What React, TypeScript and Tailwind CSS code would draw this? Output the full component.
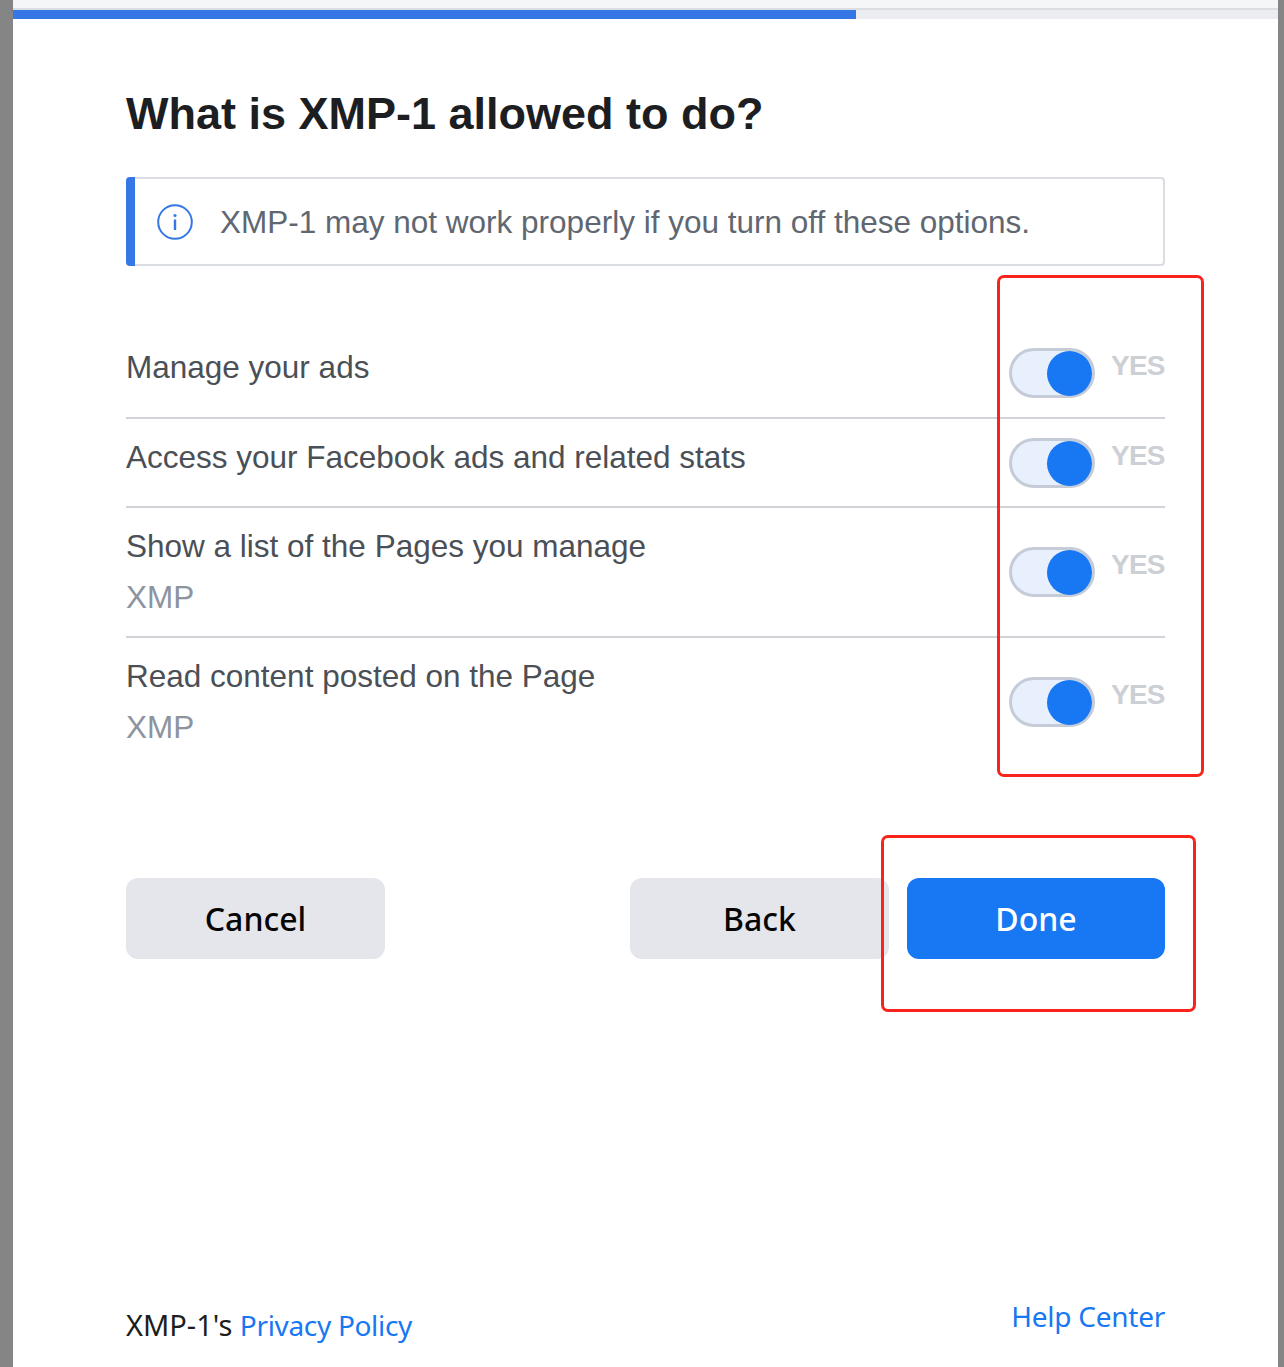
const SANS = 'font-["Liberation_Sans",Arial,sans-serif]'

interface Permission { label: string; page?: string; height: string; toggleTop: string; border: boolean }

const permissions: Permission[] = [
  { label: 'Manage your ads', height: 'h-[90px]', toggleTop: 'mt-[1px]', border: true },
  { label: 'Access your Facebook ads and related stats', height: 'h-[89px]', toggleTop: 'mt-[1px]', border: true },
  { label: 'Show a list of the Pages you manage', page: 'XMP', height: 'h-[130px]', toggleTop: 'mt-[21px]', border: true },
  { label: 'Read content posted on the Page', page: 'XMP', height: 'h-[130px]', toggleTop: 'mt-[21px]', border: false },
]

function Toggle({ top }: { top: string }) {
  return (
    <div className={`flex items-start ${top}`}>
      <div className="w-[86px] h-[50px] rounded-full bg-[#e7f0fc] border-[3px] border-[#c5ccd8] relative">
        <div className="absolute right-0 top-0 w-[45px] h-[45px] rounded-full bg-[#1877f2]" />
      </div>
      <span className={`${SANS} ml-[16px] mt-[2px] text-[28px] leading-[32px] font-bold text-[#ccd0d5] w-[54px] tracking-[-0.8px] whitespace-nowrap`}>YES</span>
    </div>
  )
}

function Row({ p }: { p: Permission }) {
  return (
    <div className={`${p.height} pt-[18px] flex justify-between ${p.border ? 'border-b-2 border-[#d0d3d8]' : ''}`}>
      <div>
        <p className={`${SANS} text-[31.5px] leading-[40px] text-[#4b4f56] whitespace-nowrap`}>{p.label}</p>
        {p.page && <p className={`${SANS} text-[31.5px] leading-[40px] mt-[11px] text-[#8d949e]`}>{p.page}</p>}
      </div>
      <Toggle top={p.toggleTop} />
    </div>
  )
}

export default function App() {
  return (
    <div className="w-[1284px] h-[1367px] bg-[#858585] overflow-hidden relative">
      <div className="ml-[13px] w-[1265px] h-[1367px] bg-white flex flex-col">
        {/* top strip + progress */}
        <div className="h-[10px] bg-[#f5f6f7] border-b-2 border-[#dadde1] shrink-0" />
        <div className="h-[9px] bg-[#ebedf0] shrink-0">
          <div className="h-full w-[843px] bg-[#3578e5]" />
        </div>

        <div className="pl-[113px] pr-[113px] flex flex-col flex-1">
          <h1 className={`${SANS} mt-[66px] text-[45px] leading-[58px] font-bold text-[#1c1e21] whitespace-nowrap`}>What is XMP-1 allowed to do?</h1>

          {/* notice */}
          <div className="mt-[34px] h-[89px] border-2 border-l-0 border-[#dadde1] rounded-[4px] flex items-center relative pl-[31px]">
            <div className="absolute left-0 top-[-2px] bottom-[-2px] w-[9px] bg-[#3578e5] rounded-l-[4px]" />
            <svg width="36" height="36" viewBox="0 0 36 36" fill="none" className="shrink-0">
              <circle cx="18" cy="18" r="16.8" stroke="#3578e5" strokeWidth="2" />
              <circle cx="18" cy="11.5" r="1.6" fill="#3578e5" />
              <rect x="16.8" y="15.5" width="2.4" height="10.5" fill="#3578e5" />
            </svg>
            <span className={`${SANS} ml-[27px] text-[31.5px] leading-[40px] text-[#606770] whitespace-nowrap`}>XMP-1 may not work properly if you turn off these options.</span>
          </div>

          <div className="mt-[63px]">
            {permissions.map(p => <Row key={p.label} p={p} />)}
          </div>

          {/* actions */}
          <div className={`mt-[110px] flex items-start font-["Noto_Sans","Open_Sans",sans-serif] text-[32px] font-medium`}>
            <button className="w-[259px] h-[81px] rounded-[12px] bg-[#e4e6eb] text-[#050505]">Cancel</button>
            <button className="ml-[245px] w-[259px] h-[81px] rounded-[12px] bg-[#e4e6eb] text-[#050505]">Back</button>
            <button className="ml-[18px] w-[258px] h-[81px] rounded-[12px] bg-[#1877f2] text-white">Done</button>
          </div>

          {/* footer */}
          <div className={`mt-auto mb-[22px] flex justify-between items-start font-["Noto_Sans","Open_Sans",sans-serif] text-[29px] leading-[40px]`}>
            <span className="mt-[2px] text-[#1c1e21]">XMP-1's <span className="text-[#1877f2] text-[28px] tracking-[-0.33px]">Privacy Policy</span></span>
            <span className="mt-[-7px] text-[#1877f2] text-[28px] tracking-[-0.25px]">Help Center</span>
          </div>
        </div>
      </div>

      {/* red annotation boxes */}
      <div className="absolute left-[997px] top-[275px] w-[207px] h-[502px] border-[3px] border-[#f8241c] rounded-[7px]" />
      <div className="absolute left-[881px] top-[835px] w-[315px] h-[177px] border-[3px] border-[#f8241c] rounded-[7px]" />
    </div>
  )
}
